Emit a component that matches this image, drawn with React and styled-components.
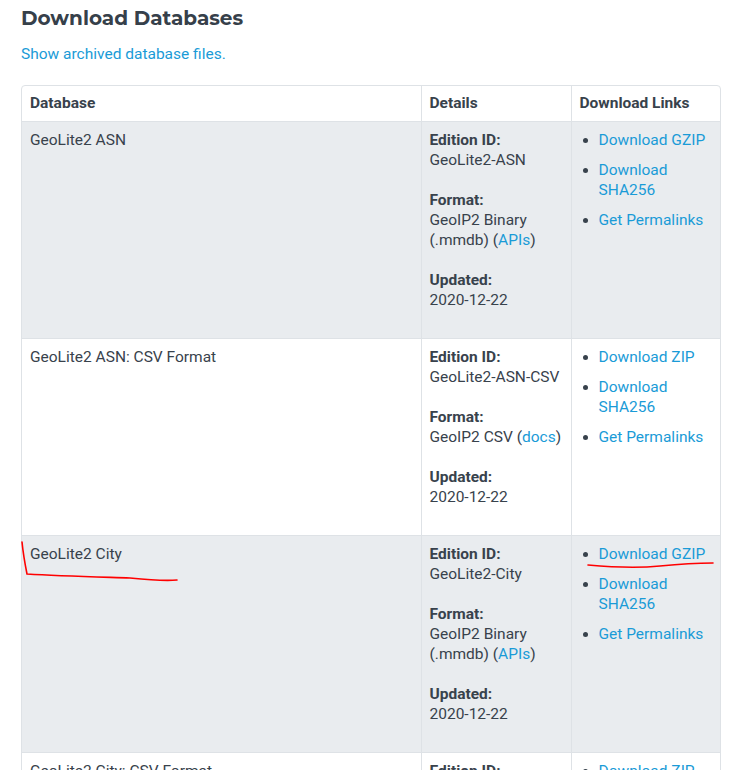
import React from "react";
import styled, { createGlobalStyle } from "styled-components";

const Global = createGlobalStyle`
  *, *::before, *::after { box-sizing: border-box; }
  html, body { margin: 0; padding: 0; background: #fff; }
  body { font-family: Roboto, "Liberation Sans", Arial, sans-serif; color: #38424c; }
`;

const Page = styled.div`
  position: relative;
  padding: 6px 21px 0 21px;
  width: 742px;
  height: 770px;
  overflow: hidden;
`;

const Title = styled.h2`
  margin: 0;
  font-family: Montserrat, "Open Sans", "DejaVu Sans", sans-serif;
  font-weight: 700;
  font-size: 20px;
  line-height: 25px;
  color: #36404a;
`;

const Link = styled.a`
  color: #1a9bd7;
  text-decoration: none;
  cursor: pointer;
`;

const Intro = styled.p`
  margin: 13px 0 0;
  font-size: 15.5px;
  line-height: 20px;
`;

const TableWrap = styled.div`
  margin-top: 21px;
  width: 700px;
  border: 1px solid #dee2e6;
  border-radius: 4px;
  overflow: hidden;
`;

const Table = styled.table`
  width: 100%;
  border-collapse: collapse;
  table-layout: fixed;
  font-size: 15.5px;
  line-height: 20px;
`;

const Th = styled.th`
  width: ${(p) => p.$w}px;
  text-align: left;
  font-weight: 700;
  padding: 7px 8px 8px;
  border-left: 1px solid #dee2e6;
  border-bottom: 1px solid #dee2e6;
  &:first-child { border-left: none; }
`;

const Tr = styled.tr`
  background: ${(p) => (p.$striped ? "#e9ecef" : "#fff")};
`;

const Td = styled.td`
  vertical-align: top;
  padding: 8px 8px 8px;
  border-left: 1px solid #dee2e6;
  border-top: 1px solid #dee2e6;
  &:first-child { border-left: none; }
`;

const Field = styled.p`
  margin: 0 0 20px;
`;

const Label = styled.strong`
  display: block;
  font-weight: 700;
`;

const List = styled.ul`
  margin: 0;
  padding-left: 19px;
  list-style: disc;
`;

const Item = styled.li`
  & + & { margin-top: 10px; }
`;

const Overlay = styled.svg`
  position: absolute;
  left: 0;
  top: 0;
  pointer-events: none;
`;

const rows = [
  {
    name: "GeoLite2 ASN",
    id: "GeoLite2-ASN",
    format: "binary",
    links: ["Download GZIP", "Download SHA256", "Get Permalinks"],
  },
  {
    name: "GeoLite2 ASN: CSV Format",
    id: "GeoLite2-ASN-CSV",
    format: "csv",
    links: ["Download ZIP", "Download SHA256", "Get Permalinks"],
  },
  {
    name: "GeoLite2 City",
    id: "GeoLite2-City",
    format: "binary",
    links: ["Download GZIP", "Download SHA256", "Get Permalinks"],
  },
  {
    name: "GeoLite2 City: CSV Format",
    id: "GeoLite2-City-CSV",
    format: "csv",
    links: ["Download ZIP", "Download SHA256", "Get Permalinks"],
  },
];

export default function App() {
  return (
    <>
      <Global />
      <Page>
        <Title>Download Databases</Title>
        <Intro>
          <Link>Show archived database files.</Link>
        </Intro>
        <TableWrap>
          <Table>
            <thead>
              <tr>
                <Th $w={399}>Database</Th>
                <Th $w={150}>Details</Th>
                <Th $w={149}>Download Links</Th>
              </tr>
            </thead>
            <tbody>
              {rows.map((r, i) => (
                <Tr key={r.id} $striped={i % 2 === 0}>
                  <Td>{r.name}</Td>
                  <Td>
                    <Field>
                      <Label>Edition ID:</Label>
                      {r.id}
                    </Field>
                    <Field>
                      <Label>Format:</Label>
                      {r.format === "binary" ? (
                        <>
                          GeoIP2 Binary (.mmdb) (<Link>APIs</Link>)
                        </>
                      ) : (
                        <>
                          GeoIP2 CSV (<Link>docs</Link>)
                        </>
                      )}
                    </Field>
                    <Field>
                      <Label>Updated:</Label>
                      2020-12-22
                    </Field>
                  </Td>
                  <Td>
                    <List>
                      {r.links.map((l) => (
                        <Item key={l}>
                          <Link>{l}</Link>
                        </Item>
                      ))}
                    </List>
                  </Td>
                </Tr>
              ))}
            </tbody>
          </Table>
        </TableWrap>
        <Overlay width="742" height="770" viewBox="0 0 742 770">
          <path
            d="M22 542 C23 552 25 564 27 574 C60 576 100 577 130 578 C150 580 165 581 177 580"
            fill="none"
            stroke="#ff0000"
            strokeWidth="1.6"
            strokeLinecap="round"
          />
          <path
            d="M588 565 C610 567 640 568 660 566 C680 564 700 563 713 563"
            fill="none"
            stroke="#ff0000"
            strokeWidth="1.6"
            strokeLinecap="round"
          />
        </Overlay>
      </Page>
    </>
  );
}
